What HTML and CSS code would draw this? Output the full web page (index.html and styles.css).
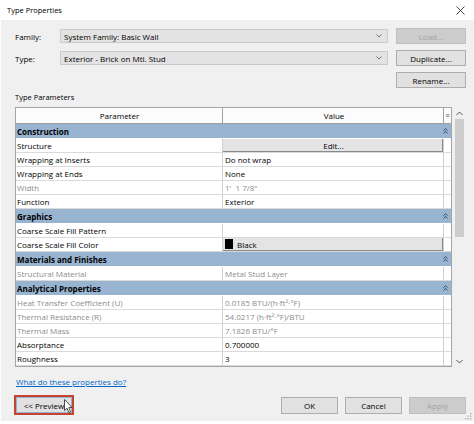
FILE: index.html
```html
<!DOCTYPE html>
<html>
	<head>
		<meta charset="UTF-8">
		<title>Type Properties</title>
		<link rel="stylesheet" href="styles.css">
	</head>
	<body>
		<div class="titlebar">
			<span>Type Properties</span>
			<svg class="close" width="9" height="9" viewBox="0 0 9 9"><path d="M0.5 0.5L8.5 8.5M8.5 0.5L0.5 8.5" stroke="#333" stroke-width="0.9"/></svg>
		</div>

		<div class="dialog">
			<div class="top">
				<div class="fields">
					<div class="field">
						<span class="label">Family:</span>
						<div class="combo">System Family: Basic Wall<svg width="6" height="4" viewBox="0 0 6 4"><path d="M0.5 0.5L3 3L5.5 0.5" fill="none" stroke="#666" stroke-width="0.9"/></svg></div>
					</div>
					<div class="field">
						<span class="label">Type:</span>
						<div class="combo">Exterior - Brick on Mtl. Stud<svg width="6" height="4" viewBox="0 0 6 4"><path d="M0.5 0.5L3 3L5.5 0.5" fill="none" stroke="#666" stroke-width="0.9"/></svg></div>
					</div>
				</div>
				<div class="side">
					<div class="btn disabled">Load...</div>
					<div class="btn">Duplicate...</div>
					<div class="btn">Rename...</div>
				</div>
			</div>

			<div class="section-label">Type Parameters</div>

			<div class="grid-area">
				<div class="grid">
					<div class="head">
						<div class="c-name">Parameter</div>
						<div class="c-value">Value</div>
						<div class="c-tail"><span class="sort">≡</span></div>
					</div>

					<div class="group">Construction<svg class="fold" width="5" height="6" viewBox="0 0 5 6"><path d="M0.5 2.5L2.5 0.7L4.5 2.5M0.5 5.3L2.5 3.5L4.5 5.3" fill="none" stroke="#2d3f66" stroke-width="0.9"/></svg></div>
					<div class="row">
						<div class="c-name">Structure</div>
						<div class="c-value"><div class="cell-btn center">Edit...</div></div>
						<div class="c-tail"></div>
					</div>
					<div class="row">
						<div class="c-name">Wrapping at Inserts</div>
						<div class="c-value">Do not wrap</div>
						<div class="c-tail"></div>
					</div>
					<div class="row">
						<div class="c-name">Wrapping at Ends</div>
						<div class="c-value">None</div>
						<div class="c-tail"></div>
					</div>
					<div class="row ro">
						<div class="c-name">Width</div>
						<div class="c-value">1'&nbsp; 1 7/8"</div>
						<div class="c-tail"></div>
					</div>
					<div class="row">
						<div class="c-name">Function</div>
						<div class="c-value">Exterior</div>
						<div class="c-tail"></div>
					</div>

					<div class="group">Graphics<svg class="fold" width="5" height="6" viewBox="0 0 5 6"><path d="M0.5 2.5L2.5 0.7L4.5 2.5M0.5 5.3L2.5 3.5L4.5 5.3" fill="none" stroke="#2d3f66" stroke-width="0.9"/></svg></div>
					<div class="row">
						<div class="c-name">Coarse Scale Fill Pattern</div>
						<div class="c-value"></div>
						<div class="c-tail"></div>
					</div>
					<div class="row">
						<div class="c-name">Coarse Scale Fill Color</div>
						<div class="c-value"><div class="cell-btn"><span class="swatch"></span>Black</div></div>
						<div class="c-tail"></div>
					</div>

					<div class="group">Materials and Finishes<svg class="fold" width="5" height="6" viewBox="0 0 5 6"><path d="M0.5 2.5L2.5 0.7L4.5 2.5M0.5 5.3L2.5 3.5L4.5 5.3" fill="none" stroke="#2d3f66" stroke-width="0.9"/></svg></div>
					<div class="row ro">
						<div class="c-name">Structural Material</div>
						<div class="c-value">Metal Stud Layer</div>
						<div class="c-tail"></div>
					</div>

					<div class="group">Analytical Properties<svg class="fold" width="5" height="6" viewBox="0 0 5 6"><path d="M0.5 2.5L2.5 0.7L4.5 2.5M0.5 5.3L2.5 3.5L4.5 5.3" fill="none" stroke="#2d3f66" stroke-width="0.9"/></svg></div>
					<div class="row ro">
						<div class="c-name">Heat Transfer Coefficient (U)</div>
						<div class="c-value">0.0185 BTU/(h·ft²·°F)</div>
						<div class="c-tail"></div>
					</div>
					<div class="row ro">
						<div class="c-name">Thermal Resistance (R)</div>
						<div class="c-value">54.0217 (h·ft²·°F)/BTU</div>
						<div class="c-tail"></div>
					</div>
					<div class="row ro">
						<div class="c-name">Thermal Mass</div>
						<div class="c-value">7.1826 BTU/°F</div>
						<div class="c-tail"></div>
					</div>
					<div class="row">
						<div class="c-name">Absorptance</div>
						<div class="c-value">0.700000</div>
						<div class="c-tail"></div>
					</div>
					<div class="row">
						<div class="c-name">Roughness</div>
						<div class="c-value">3</div>
						<div class="c-tail"></div>
					</div>
				</div>

				<div class="scrollbar">
					<svg width="7" height="5" viewBox="0 0 7 5"><path d="M0.5 4L3.5 1L6.5 4" fill="none" stroke="#555" stroke-width="1"/></svg>
					<div class="thumb"></div>
					<div class="track"></div>
					<svg width="7" height="5" viewBox="0 0 7 5"><path d="M0.5 1L3.5 4L6.5 1" fill="none" stroke="#555" stroke-width="1"/></svg>
				</div>
			</div>

			<a class="help" href="#">What do these properties do?</a>

			<div class="footer">
				<div class="preview-wrap">
					<div class="btn preview">&lt;&lt; Preview</div>
					<!-- mouse pointer resting on the button -->
					<svg class="pointer" width="9" height="15" viewBox="0 0 9 15"><path d="M0.5 0.5L0.5 11.5L3 9.2L4.8 13.6L6.6 12.8L4.8 8.6L8 8.4Z" fill="#fff" stroke="#222" stroke-width="0.8" stroke-linejoin="round"/></svg>
				</div>
				<div class="actions">
					<div class="btn">OK</div>
					<div class="btn">Cancel</div>
					<div class="btn disabled">Apply</div>
				</div>
			</div>

			<svg class="grip" width="7" height="7" viewBox="0 0 7 7"><g fill="#b5b5b5"><rect x="5" y="0" width="1.4" height="1.4"/><rect x="2.5" y="2.5" width="1.4" height="1.4"/><rect x="5" y="2.5" width="1.4" height="1.4"/><rect x="0" y="5" width="1.4" height="1.4"/><rect x="2.5" y="5" width="1.4" height="1.4"/><rect x="5" y="5" width="1.4" height="1.4"/></g></svg>
		</div>
	</body>
</html>
```

FILE: styles.css
```css
*{
	margin: 0;
	padding: 0;
	box-sizing: border-box;
}
body{
	width: 474px;
	height: 424px;
	overflow: hidden;
	background-color: #fff;
	font-family: "Open Sans", "Noto Sans", sans-serif;
	font-size: 8px;
	color: #000;
}
/* window caption */
.titlebar{
	height: 20px;
	display: flex;
	align-items: center;
	justify-content: space-between;
	padding: 0 9px 0 7px;
	font-size: 7.5px;
}
/* dialog body */
.dialog{
	position: relative;
	margin-left: 1px;
	height: 401px;
	background-color: #f0f0f0;
	padding: 8px 8px 0 14px;
	display: flex;
	flex-direction: column;
}
.top{
	display: flex;
	gap: 8px;
}
.fields{
	flex: 1;
	display: flex;
	flex-direction: column;
	gap: 6px;
}
.field{
	height: 16px;
	display: flex;
	align-items: center;
}
.label{
	width: 45px;
}
.combo{
	flex: 1;
	height: 14px;
	background-color: #e3e3e3;
	border: 1px solid #c9c9c9;
	display: flex;
	align-items: center;
	justify-content: space-between;
	padding: 0 5px 0 3px;
}
.side{
	width: 70px;
	display: flex;
	flex-direction: column;
	gap: 6px;
}
.btn{
	height: 16px;
	background-color: #e1e1e1;
	border: 1px solid #adadad;
	display: flex;
	align-items: center;
	justify-content: center;
}
.btn.disabled{
	background-color: #cccccc;
	border-color: #bfbfbf;
	color: #a3a3a3;
}
.section-label{
	margin-top: 3px;
	height: 12px;
	line-height: 12px;
	font-size: 7.5px;
}
/* parameter grid */
.grid-area{
	margin-top: 4px;
	display: flex;
}
.grid{
	width: 437px;
	border: 1px solid #a5a5a5;
	background-color: #fff;
}
.head, .row{
	display: flex;
}
.head{
	height: 16px;
	border-bottom: 1px solid #a0a0a0;
	background-color: #fcfcfc;
}
.head .c-name, .head .c-value{
	justify-content: center;
}
.row{
	height: 14px;
	border-bottom: 1px solid #dadada;
}
.c-name{
	width: 206px;
	display: flex;
	align-items: center;
	padding-left: 1px;
	white-space: nowrap;
}
.c-value{
	width: 221px;
	border-left: 1px solid #d0d0d0;
	display: flex;
	align-items: center;
	padding-left: 2px;
	white-space: nowrap;
}
.c-tail{
	width: 8px;
	border-left: 1px solid #d0d0d0;
	display: flex;
	align-items: center;
	justify-content: center;
}
.head .c-value, .head .c-tail{
	border-left-color: #a0a0a0;
}
.sort{
	font-size: 7px;
	color: #555;
	line-height: 1;
}
.row.ro{
	color: #8c8c8c;
}
.group{
	height: 15px;
	background-color: #99b4d1;
	border-bottom: 1px solid #fff;
	font-weight: bold;
	display: flex;
	align-items: center;
	justify-content: space-between;
	padding: 0 3px 0 1px;
}
.cell-btn{
	flex: 1;
	align-self: stretch;
	margin-left: -2px;
	background-color: #e4e4e4;
	border-right: 1px solid #8a8a8a;
	border-bottom: 1px solid #8a8a8a;
	display: flex;
	align-items: center;
	padding-left: 2px;
}
.cell-btn.center{
	justify-content: center;
}
.swatch{
	width: 8px;
	height: 10px;
	background-color: #000;
	margin-right: 4px;
}
.scrollbar{
	width: 13px;
	margin-left: 1px;
	display: flex;
	flex-direction: column;
	align-items: center;
	padding: 4px 0 3px;
}
.thumb{
	margin-top: 3px;
	width: 9px;
	height: 118px;
	background-color: #cdcdcd;
}
.track{
	flex: 1;
}
.help{
	margin-top: 9px;
	margin-left: 1px;
	line-height: 11px;
	color: #0066cc;
	text-decoration: underline;
	align-self: flex-start;
}
.footer{
	margin-top: 10px;
	display: flex;
	justify-content: space-between;
	align-items: flex-start;
}
.preview-wrap{
	position: relative;
	margin-left: 1px;
}
.preview{
	width: 56px;
	height: 16px;
	border-color: #9ab0cf;
	outline: 2px solid #c4452f;
}
.pointer{
	position: absolute;
	left: 48px;
	top: 2px;
}
.actions{
	display: flex;
	gap: 7px;
}
.actions .btn{
	width: 57px;
	height: 17px;
}
.grip{
	position: absolute;
	right: 2px;
	bottom: 1px;
}
```
